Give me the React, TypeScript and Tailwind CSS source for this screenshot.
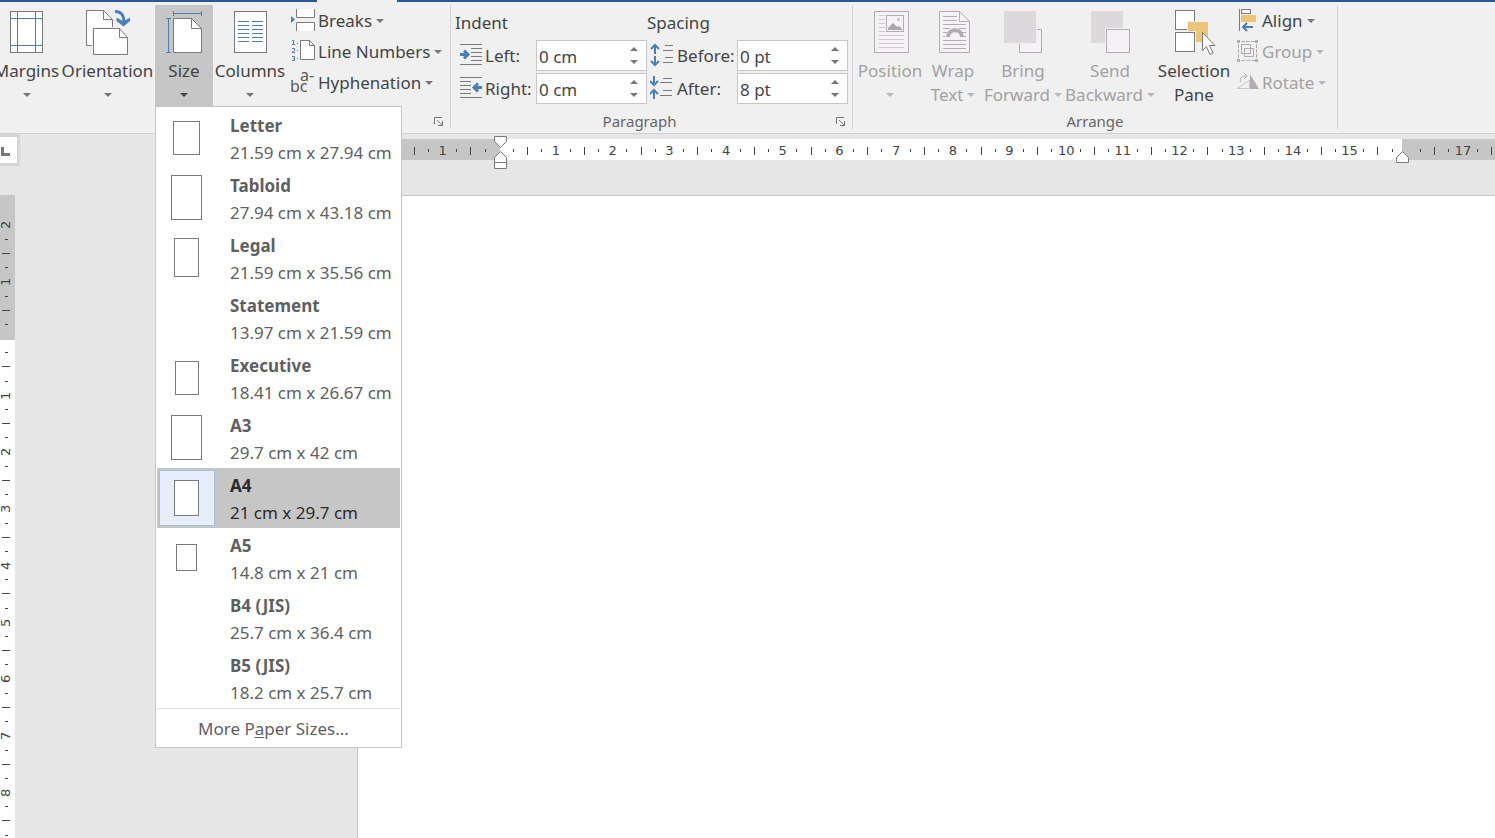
import React, { useState } from "react";
import clsx from "clsx";

const PAPER_SIZES = [
  { name: "Letter", size: "21.59 cm x 27.94 cm", icon: [27, 34] },
  { name: "Tabloid", size: "27.94 cm x 43.18 cm", icon: [31, 45] },
  { name: "Legal", size: "21.59 cm x 35.56 cm", icon: [25, 39] },
  { name: "Statement", size: "13.97 cm x 21.59 cm", icon: null },
  { name: "Executive", size: "18.41 cm x 26.67 cm", icon: [24, 34] },
  { name: "A3", size: "29.7 cm x 42 cm", icon: [31, 45] },
  { name: "A4", size: "21 cm x 29.7 cm", icon: [25, 36] },
  { name: "A5", size: "14.8 cm x 21 cm", icon: [21, 27] },
  { name: "B4 (JIS)", size: "25.7 cm x 36.4 cm", icon: null },
  { name: "B5 (JIS)", size: "18.2 cm x 25.7 cm", icon: null },
];

function Caret({ className }: { className?: string }) {
  return (
    <svg width="8" height="4" viewBox="0 0 8 4" className={clsx("shrink-0", className)}>
      <path d="M0 0h8L4 4z" fill="currentColor" />
    </svg>
  );
}

/* ---------- large icons ---------- */

function MarginsIcon() {
  return (
    <svg width="33" height="44" viewBox="0 0 33 44" fill="none">
      <rect x="0.5" y="1.5" width="32" height="41" fill="#fff" stroke="#7a7a7a" />
      <path d="M7.5 2v40M25.5 2v40M1 8.5h31M1 35.5h31" stroke="#4a7fb5" />
    </svg>
  );
}

function OrientationIcon() {
  return (
    <svg width="45" height="45" viewBox="0 0 45 45" fill="none">
      <path d="M1.5 0.5h17l9 9v26h-26z" fill="#fff" stroke="#7a7a7a" />
      <path d="M18.5 0.5v9h9" stroke="#7a7a7a" />
      <path d="M7 17h27l11 11v17H7z" fill="#f0f0f0" />
      <path d="M8.5 18.5h26l8 9v17h-34z" fill="#fff" stroke="#7a7a7a" />
      <path d="M34.5 18.5v9h8" stroke="#7a7a7a" />
      <path d="M30 1.5c6 0 9 3 9 11" stroke="#4a7fb5" strokeWidth="3" />
      <path d="M31.5 7.500l7 4 6.500-4v3.500l-6.500 5.500-7-5.500z" fill="#4a7fb5" />
    </svg>
  );
}

function SizeIcon() {
  return (
    <svg width="44" height="44" viewBox="0 0 44 44" fill="none">
      <path d="M11.5 1v5M39.5 1v5M11.5 3.5h28M4 8.5h5M4 42.5h5M6.5 8.5v34" stroke="#4a7fb5" />
      <path d="M11.5 8.5h18l10 10v24h-28z" fill="#fff" stroke="#7a7a7a" />
      <path d="M29.5 8.5v10h10" stroke="#7a7a7a" />
    </svg>
  );
}

function ColumnsIcon() {
  return (
    <svg width="34" height="44" viewBox="0 0 34 44" fill="none">
      <rect x="1.5" y="1.5" width="32" height="41" fill="#fff" stroke="#7a7a7a" />
      <path
        d="M5 11.5h11M5 15.5h11M5 19.5h11M5 23.5h11M5 27.5h11M5 31.5h11M19 11.5h11M19 15.5h11M19 19.5h11M19 23.5h11M19 27.5h11M19 31.5h11"
        stroke="#4a7fb5"
      />
    </svg>
  );
}

function PositionIcon() {
  return (
    <svg width="38" height="44" viewBox="0 0 38 44" fill="none">
      <rect x="3.5" y="1.5" width="34" height="41" fill="#f5f1f6" stroke="#b1adb1" />
      <path
        d="M8 5.5h6M8 9.5h6M8 13.5h6M8 17.5h6M8 21.5h6M8 25.5h25M8 29.5h25M8 33.5h25M8 37.5h25"
        stroke="#cfc9cf"
      />
      <rect x="15.5" y="5.5" width="17" height="16" fill="#f5f1f6" stroke="#b1adb1" />
      <path d="M17 20v-2l5-5 4 4 2-1 3 3v1z" fill="#aaa6aa" />
      <path d="M24 14l2-1 6 6" stroke="#f5f1f6" />
      <circle cx="27.5" cy="9.5" r="1.5" fill="#c5c0c5" />
    </svg>
  );
}

function WrapTextIcon() {
  return (
    <svg width="34" height="44" viewBox="0 0 34 44" fill="none">
      <path d="M3.5 1.5h20l10 10v31h-30z" fill="#f5f1f6" stroke="#b1adb1" />
      <path d="M23.5 1.5v10h10" stroke="#b1adb1" />
      <path
        d="M7 6.5h14M7 10.5h14M7 14.5h23M7 18.5h7M23 18.5h7M7 22.5h4M26 22.5h4M7 26.5h2M28 26.5h2M7 30.5h23M7 34.5h23M7 38.5h23"
        stroke="#b1adb1"
      />
      <path d="M12 27c0-9 14-9 14 0" stroke="#b1adb1" strokeWidth="4" />
    </svg>
  );
}

function BringForwardIcon() {
  return (
    <svg width="40" height="44" viewBox="0 0 40 44" fill="none">
      <rect x="16.5" y="19.5" width="22" height="23" fill="#f5f1f6" stroke="#b1adb1" />
      <path d="M0 0h34v34H0z" fill="#f0f0f0" />
      <path d="M1 1h32v32H1z" fill="#dcd8dc" />
    </svg>
  );
}

function SendBackwardIcon() {
  return (
    <svg width="40" height="44" viewBox="0 0 40 44" fill="none">
      <path d="M1 1h32v32H1z" fill="#dcd8dc" />
      <path d="M15 18h25v26H15z" fill="#f0f0f0" />
      <rect x="16.5" y="19.5" width="23" height="23" fill="#f5f1f6" stroke="#b1adb1" />
    </svg>
  );
}

function SelectionPaneIcon() {
  return (
    <svg width="44" height="46" viewBox="0 0 44 46" fill="none">
      <rect x="3.5" y="0.5" width="19" height="19" fill="#fff" stroke="#7a7a7a" />
      <path d="M15 11h22v22H15z" fill="#f0f0f0" />
      <path d="M16 12h20v20H16z" fill="#ecc57b" />
      <path d="M2 21h22v23H2z" fill="#f0f0f0" />
      <rect x="3.5" y="22.5" width="19" height="19" fill="#fff" stroke="#7a7a7a" />
      <path d="M30.5 22.500v18l4-4 3.500 8 3-1.500-3.500-7.500h5.500z" fill="#fff" stroke="#7a7a7a" />
    </svg>
  );
}

/* ---------- small icons ---------- */

function BreaksIcon() {
  return (
    <svg width="26" height="25" viewBox="0 0 26 25" fill="none">
      <path d="M6.5 1v8.500h18V1M6.5 23v-8.500h18V23" fill="#fff" stroke="#7a7a7a" />
      <path d="M1 8v7l4-3.500z" fill="#4a7fb5" />
    </svg>
  );
}

function LineNumbersIcon() {
  return (
    <svg width="26" height="25" viewBox="0 0 26 25" fill="none">
      <path
        d="M2 1.500h1.500v4M2 5.500h3M2 9.500h2.500v2l-2.500 2h3M2 17.500h2.500v4H2M3 19.500h1.500M7 4.500h1M7 11.500h1M7 19.500h1"
        stroke="#4a7fb5"
      />
      <path d="M10.500 1.500h9l5 5v14h-14z" fill="#fff" stroke="#7a7a7a" />
      <path d="M19.500 1.500v5h5" stroke="#7a7a7a" />
    </svg>
  );
}

function HyphenationIcon() {
  return (
    <svg
      width="26"
      height="25"
      viewBox="0 0 26 25"
      fill="#595959"
      fontFamily="'Noto Sans', sans-serif"
      fontSize="16"
      className="overflow-visible"
    >
      <text x="0" y="22">bc</text>
      <text x="10" y="11">a-</text>
    </svg>
  );
}

function IndentLeftIcon() {
  return (
    <svg width="23" height="25" viewBox="0 0 23 25" fill="none">
      <path d="M1 1.500h22M12 5.500h11M12 9.500h11M12 13.500h11M12 17.500h11M1 21.500h22" stroke="#7a7a7a" />
      <path d="M1 11.500h8M5 7.500l4 4-4 4" stroke="#4a7fb5" strokeWidth="3" />
    </svg>
  );
}

function IndentRightIcon() {
  return (
    <svg width="23" height="25" viewBox="0 0 23 25" fill="none">
      <path d="M1 1.500h22M1 5.500h11M1 9.500h11M1 13.500h11M1 17.500h11M1 21.500h22" stroke="#7a7a7a" />
      <path d="M23 11.500h-8M19 7.500l-4 4 4 4" stroke="#4a7fb5" strokeWidth="3" />
    </svg>
  );
}

function SpaceBeforeIcon() {
  return (
    <svg width="24" height="25" viewBox="0 0 24 25" fill="none">
      <path d="M15 2.500h8M13 7.500h10M15 14.500h8M13 19.500h10" stroke="#7a7a7a" />
      <path d="M5 2v9M1 6l4-4 4 4M5 13v9M1 18l4 4 4-4" stroke="#4a7fb5" strokeWidth="2" />
    </svg>
  );
}

function SpaceAfterIcon() {
  return (
    <svg width="24" height="25" viewBox="0 0 24 25" fill="none">
      <path d="M13 2.500h9M10 6.500h12M13 14.500h9M10 19.500h12" stroke="#7a7a7a" />
      <path d="M4 0v9M0 5l4 4 4-4M4 14v9M0 18l4-4 4 4" stroke="#4a7fb5" strokeWidth="2" />
    </svg>
  );
}

function AlignIcon() {
  return (
    <svg width="24" height="25" viewBox="0 0 24 25" fill="none">
      <path d="M3.500 1v22" stroke="#7a7a7a" />
      <rect x="5.500" y="1.500" width="9" height="4" fill="#fff" stroke="#7a7a7a" />
      <path d="M5 7h15v7H5z" fill="#ecc57b" />
      <path d="M17 19H7M11 15l-4 4 4 4" stroke="#4a7fb5" strokeWidth="2" />
    </svg>
  );
}

function GroupIcon() {
  return (
    <svg width="24" height="25" viewBox="0 0 24 25" fill="none" stroke="#b1adb1">
      <path d="M2.500 5v14M20.500 5v14M5 2.500h14M5 21.500h14" strokeDasharray="4 1" />
      <rect x="5.500" y="5.500" width="9" height="9" />
      <rect x="8.500" y="9.500" width="9" height="8" />
      <path d="M1 1h3v3H1zM19 1h3v3h-3zM1 20h3v3H1zM19 20h3v3h-3z" fill="#b1adb1" stroke="none" />
    </svg>
  );
}

function RotateIcon() {
  return (
    <svg width="24" height="25" viewBox="0 0 24 25" fill="none">
      <path d="M1 18.500h12.500V10z" stroke="#c9c5c9" />
      <path d="M14 4v15h9z" fill="#b1adb1" />
      <path d="M4.500 12c-1-4 1-6 6-6M8 3l3 3-3 3" stroke="#b1adb1" />
    </svg>
  );
}

/* ---------- ribbon parts ---------- */

interface LargeButtonProps {
  icon: React.ReactNode;
  label: string;
  label2?: string;
  caret?: boolean;
  active?: boolean;
  disabled?: boolean;
  className?: string;
  onClick?: () => void;
}

function LargeButton({ icon, label, label2, caret = true, active, disabled, className, onClick }: LargeButtonProps) {
  return (
    <button
      disabled={disabled}
      onClick={onClick}
      className={clsx(
        "flex h-[102px] shrink-0 flex-col items-center pt-[5px] leading-6 whitespace-nowrap",
        active && "bg-[#c6c6c6]",
        disabled && "text-[#a3a1a3]",
        className
      )}
    >
      <span className="flex h-[49px] items-start">{icon}</span>
      <span>{label}</span>
      <span className="flex h-6 items-center gap-1">
        {label2}
        {caret && (
          <Caret className={disabled ? "text-[#b8b6b8]" : active ? "text-[#444444]" : "text-[#777777]"} />
        )}
      </span>
    </button>
  );
}

interface SmallButtonProps {
  icon: React.ReactNode;
  label: string;
  disabled?: boolean;
}

function SmallButton({ icon, label, disabled }: SmallButtonProps) {
  return (
    <button
      disabled={disabled}
      className={clsx("flex h-[31px] items-center gap-[2px] whitespace-nowrap", disabled && "text-[#a3a1a3]")}
    >
      {icon}
      <span>{label}</span>
      <Caret className={clsx("ml-[2px]", disabled ? "text-[#b8b6b8]" : "text-[#777777]")} />
    </button>
  );
}

interface SpinnerProps {
  id: string;
  icon: React.ReactNode;
  label: string;
  initial: string;
}

function Spinner({ id, icon, label, initial }: SpinnerProps) {
  const [value, setValue] = useState(initial);

  const step = (by: number) => {
    const [n, unit] = value.split(" ");
    setValue(`${Math.max(0, Number(n) + by)} ${unit}`);
  };

  return (
    <div className="flex h-[33px] items-center">
      <label htmlFor={id} className="flex flex-1 items-center gap-[3px] whitespace-nowrap">
        {icon}
        {label}
      </label>
      <div className="flex h-[31px] w-[111px] border border-[#c6c6c6] bg-white">
        <input
          id={id}
          value={value}
          onChange={(e) => setValue(e.target.value)}
          className="w-0 flex-1 pt-[2px] pl-[2px] outline-none"
        />
        <div className="flex w-6 flex-col items-center justify-center gap-[5px] text-[#777777]">
          <button aria-label={`Increase ${id}`} onClick={() => step(1)} className="flex h-2 items-center">
            <Caret className="rotate-180" />
          </button>
          <button aria-label={`Decrease ${id}`} onClick={() => step(-1)} className="flex h-2 items-center">
            <Caret />
          </button>
        </div>
      </div>
    </div>
  );
}

function Launcher({ label }: { label: string }) {
  return (
    <button aria-label={label} className="absolute right-[6px] bottom-[6px]">
      <svg width="11" height="11" viewBox="0 0 11 11" fill="none" stroke="#777777">
        <path d="M1.500 8V1.500H9M4 4l5 5M9.500 5v4.500H5" />
      </svg>
    </button>
  );
}

function GroupLabel({ children }: { children: React.ReactNode }) {
  return <div className="h-6 text-center text-[15px] leading-6 text-[#666666]">{children}</div>;
}

function Separator() {
  return <div className="mb-1 w-px shrink-0 bg-[#d4d4d4]" />;
}

/* ---------- paper size menu ---------- */

function SizeMenu() {
  const [selected, setSelected] = useState("A4");

  return (
    <div
      role="menu"
      className="absolute top-[106px] left-[155px] z-10 w-[247px] border border-[#c6c6c6] bg-white p-px text-[#5f5f5f]"
    >
      {PAPER_SIZES.map((paper) => {
        const isSelected = paper.name === selected;
        return (
          <button
            key={paper.name}
            role="menuitemradio"
            aria-checked={isSelected}
            onClick={() => setSelected(paper.name)}
            className={clsx(
              "flex h-[60px] w-full items-center gap-[15px] pl-[2px] text-left leading-[27px] whitespace-nowrap",
              isSelected && "bg-[#c6c6c6] text-[#2b2b2b]"
            )}
          >
            <span
              className={clsx(
                "flex size-14 shrink-0 items-center justify-center border pr-px pb-px",
                isSelected ? "border-[#a9bfde] bg-[#e5eefa]" : "border-transparent"
              )}
            >
              {paper.icon && (
                <span
                  className="border border-[#7a7a7a] bg-white"
                  style={{ width: paper.icon[0], height: paper.icon[1] }}
                />
              )}
            </span>
            <span className="pt-[2px]">
              <span className="block font-bold">{paper.name}</span>
              <span className="block">{paper.size}</span>
            </span>
          </button>
        );
      })}
      <button role="menuitem" className="block h-[38px] w-full border-t border-[#e1e1e1] pt-[2px] pl-[41px] text-left">
        More P<span className="underline underline-offset-2">a</span>per Sizes...
      </button>
    </div>
  );
}

/* ---------- rulers ---------- */

// One mark every quarter of a centimetre
const H_MARKS = Array.from({ length: 80 }, (_, i) => i - 7);
const V_MARKS = Array.from({ length: 44 }, (_, i) => i - 8);

function HorizontalRuler() {
  return (
    <div className="relative mt-[5px] ml-[337px] flex h-[21px] flex-1">
      <div className="w-[143px] bg-[#c6c6c6]" />
      <div className="w-[902px] bg-white" />
      <div className="flex-1 bg-[#c6c6c6]" />
      <div className="absolute inset-0 overflow-hidden">
        <div className="ml-9 flex h-full w-[1134px] pt-[2px]">
          {H_MARKS.map((q) => (
            <span key={q} className="flex w-0 flex-1 items-center justify-center">
              {q === 0 || q === 64 ? null : q % 4 === 0 ? (
                <span>{Math.abs(q / 4)}</span>
              ) : (
                <span className={clsx("w-px bg-[#444444]", q % 2 === 0 ? "h-2" : "h-[3px]")} />
              )}
            </span>
          ))}
        </div>
      </div>
      <svg width="13" height="34" viewBox="0 0 13 34" className="absolute -top-[3px] left-[137px]">
        <path
          d="M0.500 0.500h12v5l-6 6-6-6zM6.500 15.500l6 6v11h-12v-11zM0.500 26.500h12"
          fill="#fff"
          stroke="#7a7a7a"
        />
      </svg>
      <svg width="13" height="13" viewBox="0 0 13 13" className="absolute top-3 left-[1039px]">
        <path d="M6.500 0.500l6 6v5h-12v-5z" fill="#fff" stroke="#7a7a7a" />
      </svg>
    </div>
  );
}

function VerticalRuler() {
  return (
    <div className="relative flex w-[15px] flex-col overflow-hidden">
      <div className="h-[145px] bg-[#c6c6c6]" />
      <div className="flex-1 bg-white" />
      <div className="absolute top-[23px] left-0 flex h-[624px] w-3 flex-col">
        {V_MARKS.map((q) => (
          <span key={q} className="flex h-0 flex-1 items-center justify-center">
            {q === 0 ? null : q % 4 === 0 ? (
              <span className="-rotate-90">{Math.abs(q / 4)}</span>
            ) : (
              <span className={clsx("h-px bg-[#444444]", q % 2 === 0 ? "w-2" : "w-[3px]")} />
            )}
          </span>
        ))}
      </div>
    </div>
  );
}

export default function App() {
  const [menuOpen, setMenuOpen] = useState(true);

  return (
    <div className="relative flex h-screen flex-col overflow-hidden bg-[#e6e6e6] font-['Noto_Sans',sans-serif] text-[17px] text-[#444444]">
      <div className="flex h-[2px] shrink-0 bg-[#2b579a]">
        <div className="ml-[317px] w-20 bg-[#f0f0f0]" />
      </div>

      <header className="flex h-[132px] shrink-0 border-b border-[#d0d0d0] bg-[#f0f0f0] pt-[3px]">
        <section className="relative flex w-[450px] shrink-0">
          <LargeButton icon={<MarginsIcon />} label="Margins" className="-ml-[7px] w-[67px]" />
          <LargeButton icon={<OrientationIcon />} label="Orientation" className="w-[95px]" />
          <LargeButton
            icon={<SizeIcon />}
            label="Size"
            active={menuOpen}
            onClick={() => setMenuOpen(!menuOpen)}
            className="w-[58px]"
          />
          <LargeButton icon={<ColumnsIcon />} label="Columns" className="w-[74px]" />
          <div className="ml-[3px] flex flex-col">
            <SmallButton icon={<BreaksIcon />} label="Breaks" />
            <SmallButton icon={<LineNumbersIcon />} label="Line Numbers" />
            <SmallButton icon={<HyphenationIcon />} label="Hyphenation" />
          </div>
          <Launcher label="Page setup settings" />
        </section>
        <Separator />

        <section className="relative w-[401px] shrink-0">
          <div className="flex h-[104px] pl-1">
            <div className="w-[192px]">
              <div className="h-[34px] leading-9">Indent</div>
              <div className="pl-1">
                <Spinner id="left" icon={<IndentLeftIcon />} label="Left:" initial="0 cm" />
                <Spinner id="right" icon={<IndentRightIcon />} label="Right:" initial="0 cm" />
              </div>
            </div>
            <div className="w-[201px]">
              <div className="h-[34px] leading-9">Spacing</div>
              <div className="pl-[3px]">
                <Spinner id="before" icon={<SpaceBeforeIcon />} label="Before:" initial="0 pt" />
                <Spinner id="after" icon={<SpaceAfterIcon />} label="After:" initial="8 pt" />
              </div>
            </div>
          </div>
          <div className="pr-6">
            <GroupLabel>Paragraph</GroupLabel>
          </div>
          <Launcher label="Paragraph settings" />
        </section>
        <Separator />

        <section className="w-[484px] shrink-0">
          <div className="flex h-[104px] pl-[3px]">
            <LargeButton icon={<PositionIcon />} label="Position" disabled className="w-[68px]" />
            <LargeButton icon={<WrapTextIcon />} label="Wrap" label2="Text" disabled className="w-[58px]" />
            <LargeButton icon={<BringForwardIcon />} label="Bring" label2="Forward" disabled className="w-[82px]" />
            <LargeButton icon={<SendBackwardIcon />} label="Send" label2="Backward" disabled className="w-[92px]" />
            <LargeButton
              icon={<SelectionPaneIcon />}
              label="Selection"
              label2="Pane"
              caret={false}
              className="w-[76px]"
            />
            <div className="ml-1 flex flex-col">
              <SmallButton icon={<AlignIcon />} label="Align" />
              <SmallButton icon={<GroupIcon />} label="Group" disabled />
              <SmallButton icon={<RotateIcon />} label="Rotate" disabled />
            </div>
          </div>
          <GroupLabel>Arrange</GroupLabel>
        </section>
        <Separator />
      </header>

      {menuOpen && <SizeMenu />}

      <div className="flex h-[61px] shrink-0 font-['DejaVu_Sans',sans-serif] text-[13px]">
        <button
          aria-label="Tab selector"
          className="-ml-1 flex h-8 w-6 shrink-0 items-center border-[3px] border-[#d6d6d6] bg-white pt-1"
        >
          <svg width="12" height="10" viewBox="0 0 12 10">
            <path d="M2 0h3v6h6v3H2z" fill="#777777" />
          </svg>
        </button>
        <HorizontalRuler />
      </div>

      <div className="flex flex-1">
        <div className="flex font-['DejaVu_Sans',sans-serif] text-[13px]">
          <VerticalRuler />
        </div>
        <main className="ml-[342px] flex-1 border-t border-l border-[#c6c6c6] bg-white" />
      </div>
    </div>
  );
}
